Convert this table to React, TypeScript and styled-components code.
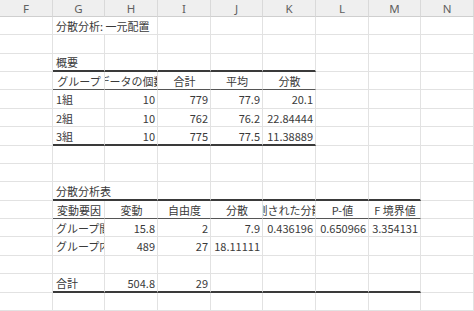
import React from "react";
import styled, { createGlobalStyle } from "styled-components";

const Global = createGlobalStyle`
  html, body { margin: 0; padding: 0; background: #ffffff; }
  body { font-family: "Noto Sans CJK JP", "Noto Sans", sans-serif; }
`;

const COLS = ["F", "G", "H", "I", "J", "K", "L", "M", "N"];
const COL_WIDTHS = [53, 52, 53, 53, 52, 53, 53, 52, 53];
const ROW_HEIGHTS = [18, 19, 18, 18, 19, 18, 19, 18, 18, 19, 18, 18, 19, 18, 19, 18];

type Align = "left" | "right" | "center";
type Edge = "grid" | "thin" | "thick";

interface CellSpec {
  text?: string;
  align?: Align;
  span?: number;
}

const Sheet = styled.div`
  display: grid;
  grid-template-columns: ${COL_WIDTHS.map((w) => `${w}px`).join(" ")};
  grid-template-rows: 17px ${ROW_HEIGHTS.map((h) => `${h}px`).join(" ")};
  width: 474px;
  height: 311px;
  overflow: hidden;
  color: #3a3a3a;
  font-size: 11px;
`;

const ColHeader = styled.div`
  box-sizing: border-box;
  display: flex;
  align-items: center;
  justify-content: center;
  background: #efefef;
  border-right: 1px solid #d9d9d9;
  border-bottom: 1px solid #cfcfcf;
  color: #606060;
  font-family: "Noto Sans", "Liberation Sans", sans-serif;
  font-size: 11.5px;
  padding-top: 1px;
`;

const justifyMap: Record<Align, string> = {
  left: "flex-start",
  right: "flex-end",
  center: "center",
};

const edgeMap: Record<Edge, string> = {
  grid: "1px solid #e2e2e2",
  thin: "1px solid #555555",
  thick: "2px solid #3a3a3a",
};

const Cell = styled.div<{ $align: Align; $bottom: Edge; $span: number }>`
  box-sizing: border-box;
  grid-column: span ${(p) => p.$span};
  display: flex;
  align-items: center;
  justify-content: ${(p) => justifyMap[p.$align]};
  padding: 1px 2px 0 3px;
  border-right: 1px solid #e2e2e2;
  border-bottom: ${(p) => edgeMap[p.$bottom]};
  white-space: nowrap;
  overflow: hidden;
  min-width: 0;
`;

const CellText = styled.span`
  flex: none;
  line-height: 1;
`;

// rows: index 0 = spreadsheet row 1; cells keyed by column letter
const L = (text: string, span = 1): CellSpec => ({ text, align: "left", span });
const R = (text: string): CellSpec => ({ text, align: "right" });
const C = (text: string): CellSpec => ({ text, align: "center" });

const content: Record<number, Record<string, CellSpec>> = {
  1: { G: L("分散分析: 一元配置", 2) },
  3: { G: L("概要") },
  4: { G: C("グループ"), H: C("データの個数"), I: C("合計"), J: C("平均"), K: C("分散") },
  5: { G: L("1組"), H: R("10"), I: R("779"), J: R("77.9"), K: R("20.1") },
  6: { G: L("2組"), H: R("10"), I: R("762"), J: R("76.2"), K: R("22.84444") },
  7: { G: L("3組"), H: R("10"), I: R("775"), J: R("77.5"), K: R("11.38889") },
  10: { G: L("分散分析表", 2) },
  11: {
    G: C("変動要因"),
    H: C("変動"),
    I: C("自由度"),
    J: C("分散"),
    K: C("観測された分散比"),
    L: C("P-値"),
    M: C("F 境界値"),
  },
  12: {
    G: L("グループ間"),
    H: R("15.8"),
    I: R("2"),
    J: R("7.9"),
    K: R("0.436196"),
    L: R("0.650966"),
    M: R("3.354131"),
  },
  13: { G: L("グループ内"), H: R("489"), I: R("27"), J: R("18.11111") },
  15: { G: L("合計"), H: R("504.8"), I: R("29") },
};

// bottom edges of table rows: [row, fromCol, toCol, edge]
const edges: [number, string, string, Edge][] = [
  [3, "G", "K", "thick"],
  [4, "G", "K", "thin"],
  [7, "G", "K", "thick"],
  [10, "G", "M", "thick"],
  [11, "G", "M", "thin"],
  [15, "G", "M", "thick"],
];

function bottomEdge(row: number, col: string): Edge {
  const ci = COLS.indexOf(col);
  for (const [r, a, b, e] of edges) {
    if (r === row && ci >= COLS.indexOf(a) && ci <= COLS.indexOf(b)) return e;
  }
  return "grid";
}

export default function App() {
  const cells: React.ReactNode[] = [];
  for (let r = 1; r <= ROW_HEIGHTS.length; r++) {
    const rowContent = content[r] || {};
    let skip = 0;
    COLS.forEach((col) => {
      if (skip > 0) {
        skip--;
        return;
      }
      const spec = rowContent[col];
      const span = spec?.span ?? 1;
      skip = span - 1;
      cells.push(
        <Cell
          key={`${r}-${col}`}
          $align={spec?.align ?? "left"}
          $bottom={bottomEdge(r, col)}
          $span={span}
        >
          {spec?.text ? <CellText>{spec.text}</CellText> : null}
        </Cell>
      );
    });
  }
  return (
    <>
      <Global />
      <Sheet>
        {COLS.map((c) => (
          <ColHeader key={c}>{c}</ColHeader>
        ))}
        {cells}
      </Sheet>
    </>
  );
}
